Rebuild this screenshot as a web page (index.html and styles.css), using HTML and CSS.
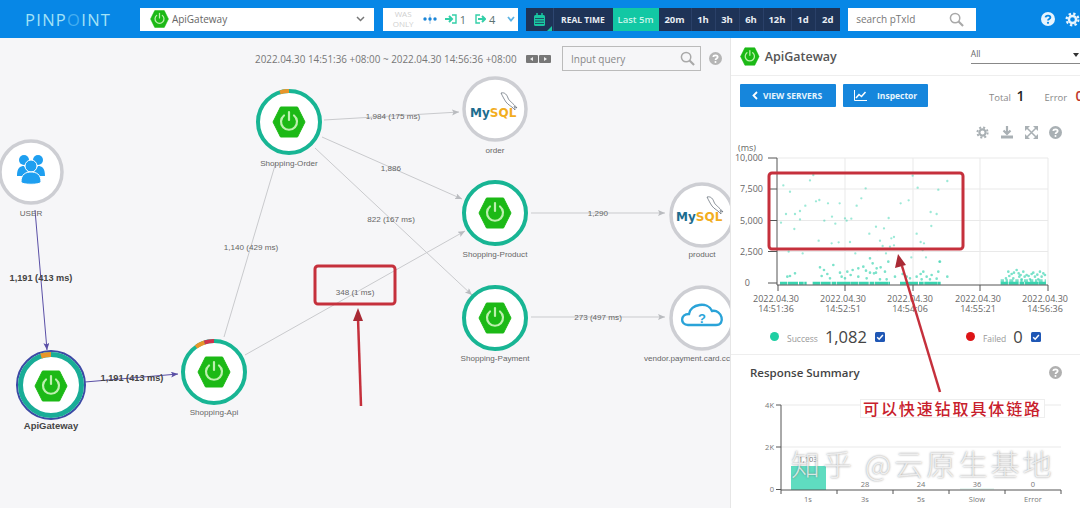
FILE: index.html
```html
<!DOCTYPE html>
<html lang="en">
<head>
    <meta charset="UTF-8">
    <title>Pinpoint - ApiGateway</title>
    <link rel="stylesheet" href="styles.css">
</head>
<body>
    <svg class="defs" width="0" height="0">
        <symbol id="spring" viewBox="-17 -16 34 32">
            <path d="M-16 0-8.5-15H8.5L16 0 8.5 15H-8.5Z" fill="#1cb916" stroke="#1cb916" stroke-linejoin="round"/>
            <path d="M-5 -6.5A8 8 0 1 0 5 -6.5" fill="none" stroke="#bdf0ae" stroke-width="2.2" stroke-linecap="round"/>
            <path d="M0 -10V-2" fill="none" stroke="#bdf0ae" stroke-width="2.2" stroke-linecap="round"/>
        </symbol>
        <symbol id="help" viewBox="0 0 14 14">
            <circle cx="7" cy="7" r="7" fill="currentColor"/>
            <path class="help-mark" d="M4.6 5.4C4.7 3 9.4 3 9.4 5.4 9.4 7 7 6.900 7 8.500" fill="none" stroke-width="1.800"/>
            <circle class="help-dot" cx="7" cy="10.800" r="1.100"/>
        </symbol>
        <symbol id="gear" viewBox="0 0 16 16">
            <circle cx="8" cy="8" r="3.800" fill="none" stroke="currentColor" stroke-width="2.600"/>
            <circle cx="8" cy="8" r="6.300" fill="none" stroke="currentColor" stroke-width="2.400" stroke-dasharray="2.500 2.450"/>
        </symbol>
        <symbol id="search" viewBox="0 0 16 16">
            <circle cx="6.500" cy="6.500" r="5" fill="none" stroke="currentColor" stroke-width="1.600"/>
            <path d="M10.200 10.200 15 15" stroke="currentColor" stroke-width="2.200"/>
        </symbol>
        <symbol id="check" viewBox="0 0 10 10">
            <rect width="10" height="10" rx="1.500" fill="#1f57b5"/>
            <path d="M2.200 5.200 4.200 7.200 7.900 2.900" fill="none" stroke="#fff" stroke-width="1.500"/>
        </symbol>
        <symbol id="mysql" viewBox="0 0 48 30">
            <path d="M31 2C35 1 37 4 38 7 39 10 43 12 47 17L44 15.500C45 17 45 18 45 19 43 16 38 14 36 11 34 8 33 6 31 2Z" fill="none" stroke="#5a6470" stroke-width=".7"/>
            <text x="0" y="26" class="mysql-my">My</text>
            <text x="19.800" y="26" class="mysql-sql">SQL</text>
        </symbol>
    </svg>

    <div class="page">
        <header class="topbar">
            <div class="logo">PINP<span class="logo-o">O</span>INT</div>

            <div class="app-select">
                <svg class="app-icon" width="19" height="18"><use href="#spring"/></svg>
                <span>ApiGateway</span>
                <svg class="chevron" width="9" height="6" viewBox="0 0 9 6"><path d="M1 1 4.500 4.500 8 1" fill="none" stroke="#777" stroke-width="1.500"/></svg>
            </div>

            <div class="was-box">
                <div class="was-only">WAS<br>ONLY</div>
                <svg width="14" height="10" viewBox="0 0 14 10">
                    <path d="M7 0V10" stroke="#9fc9ea" stroke-width="1"/>
                    <g fill="#1b86d8"><circle cx="2" cy="5" r="1.700"/><circle cx="7" cy="5" r="1.700"/><circle cx="12" cy="5" r="1.700"/></g>
                </svg>
                <svg class="flow-in" width="12" height="10" viewBox="0 0 12 10">
                    <path d="M0 5H6M4 2 7 5 4 8" fill="none" stroke="#33cfa8" stroke-width="2"/>
                    <path d="M7 1H11V9H7" fill="none" stroke="#33cfa8" stroke-width="1.400"/>
                </svg>
                <span class="flow-count">1</span>
                <svg class="flow-out" width="11" height="10" viewBox="0 0 11 10">
                    <path d="M5 1H1V9H5" fill="none" stroke="#33cfa8" stroke-width="1.400"/>
                    <path d="M3 5H9M7 2 10 5 7 8" fill="none" stroke="#33cfa8" stroke-width="2"/>
                </svg>
                <span class="flow-count">4</span>
                <svg class="was-chevron" width="8" height="6" viewBox="0 0 8 6"><path d="M1 1 4 4.500 7 1" fill="none" stroke="#5fb4e4" stroke-width="1.800"/></svg>
            </div>

            <nav class="range-bar">
                <div class="range-calendar">
                    <svg width="11" height="13" viewBox="0 0 11 13">
                        <rect y="2" width="11" height="11" rx="1.500" fill="#19c7a2"/>
                        <path d="M3 0V3M8 0V3" stroke="#19c7a2" stroke-width="1.500"/>
                        <path d="M1 5.500H10M1 8H10M1 10.500H10" stroke="#1e3357" stroke-width=".8"/>
                    </svg>
                </div>
                <span class="range-real">REAL TIME</span>
                <span class="range-on">Last 5m</span>
                <span class="range-item r20">20m</span>
                <span class="range-item">1h</span>
                <span class="range-item">3h</span>
                <span class="range-item">6h</span>
                <span class="range-item r12">12h</span>
                <span class="range-item">1d</span>
                <span class="range-item">2d</span>
            </nav>

            <div class="txid-box">
                <span>search pTxId</span>
                <svg class="search-icon" width="15" height="15"><use href="#search"/></svg>
            </div>

            <svg class="top-help" width="14" height="14"><use href="#help"/></svg>
            <svg class="top-gear" width="15" height="15"><use href="#gear"/></svg>
        </header>

        <main class="main">
            <section class="map">
                <svg class="map-canvas" width="730" height="470" viewBox="0 38 730 470">
                    <defs>
                        <marker id="tipGrey" markerWidth="8" markerHeight="8" refX="7" refY="3" orient="auto"><path d="M0 0 7 3 0 6 1.500 3Z" fill="#b9bbbf"/></marker>
                        <marker id="tipPurple" markerWidth="8" markerHeight="8" refX="7" refY="3" orient="auto"><path d="M0 0 7 3 0 6 1.500 3Z" fill="#5a4fa6"/></marker>
                    </defs>

                    <!-- edges -->
                    <g class="edge">
                        <path d="M224 337 276 162"/>
                        <path d="M245 355 465 231" marker-end="url(#tipGrey)"/>
                        <path d="M324 120 459 112" marker-end="url(#tipGrey)"/>
                        <path d="M322 137 462 199" marker-end="url(#tipGrey)"/>
                        <path d="M315 148 472 295" marker-end="url(#tipGrey)"/>
                        <path d="M531 213 665 213" marker-end="url(#tipGrey)"/>
                        <path d="M531 317 665 317" marker-end="url(#tipGrey)"/>
                    </g>
                    <g class="edge-main">
                        <path d="M35 210 47 350" marker-end="url(#tipPurple)"/>
                        <path d="M85 382 178 374" marker-end="url(#tipPurple)"/>
                    </g>

                    <!-- edge labels -->
                    <g class="edge-text">
                        <text x="251" y="250">1,140 (429 ms)</text>
                        <text x="355" y="295">348 (1 ms)</text>
                        <text x="393" y="119">1,984 (175 ms)</text>
                        <text x="391" y="171">1,886</text>
                        <text x="391" y="222">822 (167 ms)</text>
                        <text x="598" y="216">1,290</text>
                        <text x="598" y="320">273 (497 ms)</text>
                    </g>
                    <g class="edge-text bold">
                        <text x="41" y="281">1,191 (413 ms)</text>
                        <text x="132" y="381">1,191 (413 ms)</text>
                    </g>

                    <!-- user -->
                    <circle class="ring-grey" cx="31" cy="172" r="31"/>
                    <g fill="#1e9ff0">
                        <circle cx="24" cy="160" r="5"/><circle cx="38" cy="160" r="5"/>
                        <path d="M17 176C17 168 20 166 24 166L28 172 26 176ZM45 176C45 168 42 166 38 166L34 172 36 176Z"/>
                        <circle cx="31" cy="166" r="6" stroke="#fff"/>
                        <path d="M21 182C21 174 26 172 31 172 36 172 41 174 41 182 41 185 21 185 21 182Z" stroke="#fff"/>
                    </g>

                    <!-- apigateway -->
                    <circle class="node-bg" cx="51" cy="385" r="33"/>
                    <circle class="ring-outer" cx="51" cy="385" r="34"/>
                    <circle class="ring-thick" cx="51" cy="385" r="30.500"/>
                    <path class="arc-orange thick" d="M41 356A30.500 30.500 0 0 1 51 354.500"/>
                    <use href="#spring" x="34" y="370" width="34" height="32"/>

                    <!-- shopping-api -->
                    <circle class="ring-teal" cx="214" cy="372" r="31"/>
                    <path class="arc-orange" d="M196 347A31 31 0 0 1 204.500 342.500"/>
                    <path class="arc-red" d="M204.500 342.500A31 31 0 0 1 214 341"/>
                    <use href="#spring" x="197" y="356" width="34" height="32"/>

                    <!-- shopping-order -->
                    <circle class="ring-teal" cx="289" cy="122" r="31"/>
                    <path class="arc-orange" d="M280 92.300A31 31 0 0 1 289 91"/>
                    <use href="#spring" x="272" y="106" width="34" height="32"/>

                    <!-- shopping-product / payment -->
                    <circle class="ring-teal" cx="495" cy="213" r="31"/>
                    <use href="#spring" x="478" y="197" width="34" height="32"/>
                    <circle class="ring-teal" cx="495" cy="318" r="31"/>
                    <use href="#spring" x="478" y="302" width="34" height="32"/>

                    <!-- databases and cloud -->
                    <circle class="ring-grey" cx="495" cy="109" r="31"/>
                    <use href="#mysql" x="470" y="91" width="48" height="30"/>
                    <circle class="ring-grey" cx="702" cy="215" r="31"/>
                    <use href="#mysql" x="676" y="195" width="48" height="30"/>
                    <circle class="ring-grey" cx="702" cy="318" r="31"/>
                    <path d="M688 325C680 325 680 314 689 314 690 304 708 301 712 311 722 309 726 325 716 325Z" fill="none" stroke="#2aa3d8" stroke-width="2.400"/>
                    <text class="cloud-mark" x="702" y="323">?</text>

                    <!-- node names -->
                    <g class="node-name">
                        <text x="31" y="216">USER</text>
                        <text x="214" y="415">Shopping-Api</text>
                        <text x="289" y="166">Shopping-Order</text>
                        <text x="495" y="153">order</text>
                        <text x="495" y="257">Shopping-Product</text>
                        <text x="702" y="257">product</text>
                        <text x="495" y="361">Shopping-Payment</text>
                        <text class="vendor-name" x="644" y="361">vendor.payment.card.cc</text>
                    </g>
                    <text class="node-name strong" x="51" y="429">ApiGateway</text>
                </svg>

                <div class="map-toolbar">
                    <span class="time-range">2022.04.30 14:51:36 +08:00 ~ 2022.04.30 14:56:36 +08:00</span>
                    <span class="video-btns"><i class="video-prev"></i><i class="video-next"></i></span>
                    <div class="query-box">
                        <span>Input query</span>
                        <svg class="search-icon" width="15" height="15"><use href="#search"/></svg>
                    </div>
                    <svg class="grey-help" width="13" height="13"><use href="#help"/></svg>
                </div>
            </section>

            <aside class="panel">
                <div class="panel-head">
                    <svg width="20" height="19"><use href="#spring"/></svg>
                    <h2>ApiGateway</h2>
                    <div class="agent-select"><span>All</span><i class="caret"></i></div>
                </div>

                <div class="panel-actions">
                    <button class="blue-btn view-btn">
                        <svg width="6" height="9" viewBox="0 0 6 9"><path d="M5 1 1.500 4.500 5 8" fill="none" stroke="#fff" stroke-width="1.800"/></svg>
                        VIEW SERVERS
                    </button>
                    <button class="blue-btn inspector-btn">
                        <svg width="13" height="11" viewBox="0 0 13 11"><path d="M.5 0V10.500H13" fill="none" stroke="#fff"/><path d="M2 8 5 4.500 7.500 6.500 11.500 2" fill="none" stroke="#fff" stroke-width="1.500"/></svg>
                        Inspector
                    </button>
                    <div class="stat-total">Total <b>1</b></div>
                    <div class="stat-error">Error <b>0</b></div>
                </div>

                <div class="chart-tools">
                    <svg width="13" height="13"><use href="#gear"/></svg>
                    <svg width="14" height="13" viewBox="0 0 14 13"><path d="M7 0V7M3.500 4.500 7 8 10.500 4.500" fill="none" stroke="currentColor" stroke-width="2.200"/><path d="M1 9.500H13V12.500H1Z" fill="currentColor"/></svg>
                    <svg width="13" height="13" viewBox="0 0 13 13"><path d="M2 2 11 11M11 2 2 11" stroke="currentColor" stroke-width="1.500"/><path d="M0 0H5L0 5ZM13 0H8L13 5ZM0 13H5L0 8ZM13 13H8L13 8Z" fill="currentColor"/></svg>
                    <svg width="13" height="13"><use href="#help"/></svg>
                </div>

                <svg class="scatter" width="349" height="180" viewBox="731 145 349 180">
                    <g class="grid">
                        <path d="M777 158H1048M777 189H1048M777 220.500H1048M777 251.500H1048"/>
                        <path d="M845 158V285M913 158V285M980 158V285M1048 158V285"/>
                    </g>
                    <g transform="translate(730 120) scale(.3333)">
                        <path class="dots" d="M160 196h0M180 215h0M168 282h0M153 308h0M195 282h0M210 273h0M210 298h0M193 327h0M226 257h0M240 181h0M250 165h0M258 244h0M268 240h0M294 250h0M283 302h0M306 290h0M316 311h0M329 250h0M266 362h0M305 370h0M326 367h0M345 295h0M350 302h0M364 296h0M360 366h0M380 257h0M394 235h0M407 205h0M418 341h0M438 320h0M450 362h0M462 325h0M476 294h0M458 378h0M484 355h0M492 351h0M442 388h0M480 380h0M492 376h0M512 250h0M536 241h0M548 167h0M563 203h0M560 341h0M572 366h0M582 370h0M602 276h0M604 318h0M620 282h0M625 209h0M652 183h0M176 395h0M218 400h0M376 400h0M468 400h0M544 412h0M578 390h0M588 412h0M628 425h0"/>
                        <path class="dots low" d="M172 470h0M180 468h0M195 460h0M270 442h0M275 468h0M282 450h0M292 462h0M310 435h0M330 458h0M335 470h0M352 455h0M362 465h0M368 450h0M385 445h0M385 470h0M400 440h0M408 452h0M420 458h0M432 460h0M438 458h0M420 415h0M428 430h0M440 445h0M452 442h0M465 455h0M475 425h0M495 470h0M518 462h0M530 470h0M540 475h0M560 470h0M572 462h0M580 455h0M590 470h0M605 465h0M625 455h0M630 425h0M652 470h0M835 455h0M845 462h0M860 450h0M868 470h0M880 455h0M890 465h0M905 462h0M915 470h0M930 455h0M935 470h0M945 465h0M850 475h0M875 478h0M900 478h0M925 478h0M838 468h0M852 458h0M866 460h0M872 465h0M884 470h0M896 468h0M910 458h0M922 464h0M940 460h0M828 475h0M300 475h0M345 475h0M410 475h0M450 478h0M470 478h0M575 478h0M600 478h0M620 476h0"/>
                        <path class="dots band" d="M150 490H230M248 490H480M510 490H632M812 490H948"/>
                        <path class="dots band2" d="M812 482H948"/>
                    </g>
                    <path class="axis" d="M768 158H777V285H1048M768 189H777M768 220.500H777M768 251.500H777M768 283H777M778 285V291M845 285V291M913 285V291M980 285V291M1048 285V291"/>
                    <text class="unit" x="747" y="151">(ms)</text>
                    <g class="y-text">
                        <text x="763" y="161">10,000</text>
                        <text x="763" y="192">7,500</text>
                        <text x="763" y="223.500">5,000</text>
                        <text x="763" y="254.500">2,500</text>
                        <text x="750" y="286">0</text>
                    </g>
                    <g class="x-text">
                        <text x="776" y="302">2022.04.30</text><text x="776" y="312">14:51:36</text>
                        <text x="843" y="302">2022.04.30</text><text x="843" y="312">14:52:51</text>
                        <text x="910" y="302">2022.04.30</text><text x="910" y="312">14:54:06</text>
                        <text x="978" y="302">2022.04.30</text><text x="978" y="312">14:55:21</text>
                        <text x="1045" y="302">2022.04.30</text><text x="1045" y="312">14:56:36</text>
                    </g>
                </svg>

                <div class="legend">
                    <span class="legend-dot dot-ok"></span>
                    <span class="legend-name">Success</span>
                    <span class="legend-count">1,082</span>
                    <svg width="10" height="10"><use href="#check"/></svg>
                    <span class="legend-dot dot-fail"></span>
                    <span class="legend-name">Failed</span>
                    <span class="legend-count">0</span>
                    <svg width="10" height="10"><use href="#check"/></svg>
                </div>

                <div class="summary-head">
                    <h3>Response Summary</h3>
                    <svg width="13" height="13"><use href="#help"/></svg>
                </div>

                <svg class="bars" width="349" height="118" viewBox="731 390 349 118">
                    <g class="grid">
                        <path d="M781 405H1061M781 447H1061"/>
                    </g>
                    <rect class="bar" x="791" y="466" width="35" height="24"/>
                    <path d="M960 489H994" stroke="#d5efe7"/>
                    <path class="axis" d="M776 405H781M776 447H781M776 489.500H781M781 405V490H1061M781 490V494M837 490V494M893 490V494M949 490V494M1005 490V494M1061 490V494"/>
                    <g class="y-text">
                        <text x="774" y="408">4K</text>
                        <text x="774" y="450">2K</text>
                        <text x="774" y="492">0</text>
                    </g>
                    <g class="x-text">
                        <text x="808" y="462">1,103</text>
                        <text x="865" y="487">28</text>
                        <text x="921" y="487">24</text>
                        <text x="977" y="487">36</text>
                        <text x="1033" y="487">0</text>
                        <text x="808" y="502">1s</text>
                        <text x="865" y="502">3s</text>
                        <text x="921" y="502">5s</text>
                        <text x="977" y="502">Slow</text>
                        <text x="1033" y="502">Error</text>
                    </g>
                </svg>
            </aside>
        </main>

        <!-- red notes on top of the screenshot -->
        <svg class="notes" width="1080" height="508">
            <rect x="315" y="266" width="80" height="38" rx="3"/>
            <rect x="769" y="173" width="194" height="76" rx="3"/>
            <path d="M361 406 358 318"/>
            <path class="tip" d="M358 308 353 321H363Z"/>
            <path d="M940 392 902 266"/>
            <path class="tip" d="M898 254 895 268 906 265Z"/>
        </svg>
        <div class="callout">可以快速钻取具体链路</div>
        <div class="watermark">知乎 @云原生基地</div>
    </div>
</body>
</html>
```

FILE: styles.css
```css
* {
    margin: 0;
    padding: 0;
    box-sizing: border-box;
}

body {
    font-family: "Open Sans", "Noto Sans", sans-serif;
    background: #fff;
    color: #555;
    overflow: hidden;
}

.defs {
    position: absolute;
}

.page {
    position: relative;
    width: 1080px;
    height: 508px;
    overflow: hidden;
}

.help-mark {
    stroke: var(--help-mark, #fff);
}

.help-dot {
    fill: var(--help-mark, #fff);
}

/* top bar */
.topbar {
    display: flex;
    align-items: center;
    height: 38px;
    background: #0787e6;
    padding: 0 0 0 25px;
}

.logo {
    width: 115px;
    font-size: 16.5px;
    letter-spacing: 1.3px;
    color: #a3e2f6;
}

.logo-o {
    color: #45aef0;
}

.app-select {
    display: flex;
    align-items: center;
    width: 234px;
    height: 23px;
    padding: 0 9px 0 10px;
    background: #fff;
    font-size: 10px;
    color: #666;
}

.app-select span {
    margin-left: 3px;
}

.chevron {
    margin-left: auto;
}

.was-box {
    display: flex;
    align-items: center;
    width: 135px;
    height: 23px;
    margin-left: 9px;
    padding-left: 9px;
    background: #fff;
}

.was-only {
    width: 23px;
    margin-right: 8px;
    font-size: 8px;
    line-height: 10px;
    color: #cfcfcf;
    text-align: center;
}

.flow-in {
    margin-left: 8px;
}

.flow-out {
    margin-left: 9px;
}

.flow-count {
    margin-left: 3px;
    font-size: 11px;
    color: #5c7272;
}

.was-chevron {
    margin-left: 12px;
}

.range-bar {
    display: flex;
    align-items: center;
    width: 315px;
    height: 23px;
    margin-left: 8px;
    background: #1e3357;
    color: #e8edf3;
    font-size: 9.5px;
    font-weight: 700;
}

.range-calendar {
    position: relative;
    display: flex;
    align-items: center;
    justify-content: center;
    width: 28px;
    height: 100%;
    border-right: 1px solid #2e4670;
}

.range-calendar::after {
    content: "";
    position: absolute;
    right: 1px;
    bottom: 0;
    border-left: 5px solid transparent;
    border-bottom: 5px solid #19c7a2;
}

.range-real {
    width: 59px;
    text-align: center;
    font-size: 8.5px;
}

.range-on {
    width: 46px;
    height: 100%;
    line-height: 23px;
    text-align: center;
    background: #12c8a4;
    color: #c9f5ea;
    font-weight: 600;
}

.range-item {
    width: 24px;
    text-align: center;
    border-right: 1px solid #2a4068;
    line-height: 23px;
}

.range-item.r20 {
    width: 33px;
}

.range-item.r12 {
    width: 28px;
}

.range-item:last-child {
    border-right: 0;
    flex: 1;
}

.txid-box {
    display: flex;
    align-items: center;
    justify-content: space-between;
    width: 128px;
    height: 23px;
    margin-left: 8px;
    padding: 0 3px 0 8px;
    background: #fff;
    font-size: 10px;
    color: #777;
}

.txid-box .search-icon {
    margin-right: 9px;
}

.search-icon {
    color: #a9a9a9;
}

.top-help {
    --help-mark: #0787e6;
    margin-left: 65px;
    color: #e8f4fd;
}

.top-gear {
    margin-left: 10px;
    color: #e8f4fd;
}

/* server map */
.main {
    display: flex;
    height: 470px;
}

.map {
    position: relative;
    width: 730px;
    flex: none;
    background: #f6f6f8;
    overflow: hidden;
}

.map-canvas {
    position: absolute;
    left: 0;
    top: 0;
}

.edge path {
    fill: none;
    stroke: #c9cacd;
    stroke-width: 1;
}

.edge-main path {
    fill: none;
    stroke: #5a4fa6;
    stroke-width: 1;
}

.edge-text text,
.node-name text,
.node-name.strong {
    font-family: "Liberation Sans", sans-serif;
    text-anchor: middle;
    font-size: 8.1px;
    fill: #666;
}

.node-name .vendor-name {
    text-anchor: start;
}

.edge-text.bold text {
    font-weight: 700;
    font-size: 9.2px;
    fill: #444;
}

.node-name.strong {
    font-weight: 700;
    font-size: 9.5px;
    fill: #444;
}

.ring-grey,
.ring-teal,
.node-bg,
.ring-outer,
.ring-thick {
    fill: #fff;
}

.ring-grey {
    stroke: #cdced3;
    stroke-width: 3.5;
}

.ring-teal {
    stroke: #18b594;
    stroke-width: 4;
}

.ring-outer {
    fill: none;
    stroke: #3c4aa5;
    stroke-width: 2;
}

.ring-thick {
    fill: none;
    stroke: #19ad97;
    stroke-width: 5;
}

.arc-orange,
.arc-red {
    fill: none;
    stroke-width: 4;
}

.arc-orange {
    stroke: #e8952a;
}

.arc-orange.thick {
    stroke-width: 5;
}

.arc-red {
    stroke: #d0324c;
}

.mysql-my,
.mysql-sql {
    font-family: "DejaVu Sans", sans-serif;
    font-weight: 700;
    font-size: 12px;
}

.mysql-my {
    fill: #1d6c8f;
}

.mysql-sql {
    fill: #f2ad1f;
}

.cloud-mark {
    font-family: "Liberation Sans", sans-serif;
    font-weight: 700;
    font-size: 13px;
    text-anchor: middle;
    fill: #2aa3d8;
}

.map-toolbar {
    position: relative;
    display: flex;
    align-items: center;
    height: 25px;
    margin-top: 8px;
    padding-left: 255px;
}

.time-range {
    width: 271px;
    font-size: 9.9px;
    color: #777;
    white-space: nowrap;
}

.video-btns {
    display: flex;
    gap: 1px;
}

.video-btns i {
    display: flex;
    align-items: center;
    justify-content: center;
    width: 12px;
    height: 8px;
    border-radius: 1px;
    background: #777;
}

.video-btns i::after {
    content: "";
    border: 2px solid transparent;
}

.video-btns .video-prev::after {
    border-right: 3px solid #eee;
    margin-left: -3px;
}

.video-btns .video-next::after {
    border-left: 3px solid #eee;
    margin-left: 3px;
}

.query-box {
    display: flex;
    align-items: center;
    justify-content: space-between;
    width: 139px;
    height: 25px;
    margin-left: 11px;
    padding: 0 5px 0 8px;
    border: 1px solid #bbb;
    font-size: 10px;
    color: #888;
}

.grey-help {
    margin-left: 8px;
    color: #b5b5b5;
}

/* right panel */
.panel {
    width: 350px;
    flex: none;
    border-left: 1px solid #e6e6e6;
    background: #fff;
}

.panel-head {
    display: flex;
    align-items: center;
    height: 38px;
    padding-left: 9px;
    border-bottom: 1px solid #eee;
}

.panel-head h2 {
    margin-left: 5px;
    font-size: 12.5px;
    font-weight: 600;
    color: #555;
}

.agent-select {
    position: relative;
    align-self: flex-start;
    width: 111px;
    height: 16px;
    margin-left: 134px;
    margin-top: 10px;
    border-bottom: 1px solid #888;
    font-size: 8.5px;
    line-height: 12px;
    color: #666;
}

.caret {
    position: absolute;
    right: 1px;
    top: 5px;
    border: 3px solid transparent;
    border-top: 4px solid #333;
}

.panel-actions {
    display: flex;
    align-items: center;
    height: 44px;
    padding: 8px 0 13px 9px;
}

.blue-btn {
    display: flex;
    flex: none;
    align-items: center;
    height: 23px;
    border: 0;
    border-radius: 1px;
    background: #1686dc;
    color: #e6f4fd;
    font-family: "Open Sans", sans-serif;
    font-size: 8.5px;
    font-weight: 700;
}

.view-btn {
    width: 96px;
    gap: 5px;
    padding-left: 12px;
}

.inspector-btn {
    width: 85px;
    margin-left: 7px;
    gap: 10px;
    padding-left: 11px;
}

.stat-total,
.stat-error {
    flex: none;
    font-size: 9.5px;
    color: #888;
    white-space: nowrap;
}

.stat-total {
    margin-left: 61px;
}

.stat-error {
    margin-left: 20px;
}

.stat-total b,
.stat-error b {
    margin-left: 3px;
    font-size: 14px;
    font-weight: 600;
    color: #222;
}

.stat-error b {
    margin-left: 6px;
    color: #c0392b;
}

.chart-tools {
    display: flex;
    justify-content: flex-end;
    align-items: center;
    gap: 11px;
    height: 25px;
    padding-right: 18px;
    color: #a9b0b4;
}

.scatter,
.bars {
    display: block;
}

.grid path {
    fill: none;
    stroke: #e9e9e9;
    stroke-width: 1;
}

.axis {
    fill: none;
    stroke: #555;
    stroke-width: 1;
}

.dots {
    fill: none;
    stroke: #23cfa6;
    stroke-width: 7;
    stroke-linecap: round;
    opacity: .45;
}

.dots.low {
    stroke-width: 8;
    opacity: .6;
}

.dots.band {
    stroke-width: 9;
    stroke-linecap: butt;
    stroke-dasharray: 22 2 30 3 14 2 40 1;
    opacity: .9;
}

.dots.band2 {
    stroke-width: 8;
    stroke-linecap: butt;
    stroke-dasharray: 10 5 7 4 12 6;
    opacity: .6;
}

.y-text text,
.unit,
.x-text text {
    font-family: "Open Sans", sans-serif;
    font-size: 9px;
    fill: #666;
}

.y-text text {
    text-anchor: end;
}

.unit {
    text-anchor: middle;
}

.x-text text {
    text-anchor: middle;
}

.legend {
    display: flex;
    align-items: center;
    height: 30px;
    padding: 0 0 6px 39px;
    border-bottom: 1px solid #eee;
}

.legend-dot {
    width: 9px;
    height: 9px;
    border-radius: 50%;
}

.dot-ok {
    background: #1fcfa3;
}

.dot-fail {
    margin-left: 81px;
    background: #dd1416;
}

.legend-name {
    margin-left: 8px;
    margin-top: 3px;
    font-size: 8.5px;
    color: #999;
}

.legend-count {
    margin-left: 7px;
    margin-right: 8px;
    font-size: 16.5px;
    color: #444;
}

.summary-head {
    display: flex;
    align-items: center;
    justify-content: space-between;
    height: 35px;
    padding: 0 18px 0 19px;
    color: #b0b0b0;
}

.summary-head h3 {
    font-size: 11.5px;
    font-weight: 600;
    color: #444;
}

.bar {
    fill: #5fdcc0;
}

.bars .y-text text,
.bars .x-text text {
    font-size: 7.5px;
    fill: #777;
}

/* notes drawn over the page */
.notes {
    position: absolute;
    left: 0;
    top: 0;
    pointer-events: none;
}

.notes rect,
.notes path {
    fill: none;
    stroke: #c5303c;
    stroke-width: 2.5;
}

.notes rect {
    stroke-width: 3;
}

.notes .tip {
    fill: #a92a35;
    stroke: none;
}

.callout {
    position: absolute;
    left: 860px;
    top: 399px;
    width: 185px;
    height: 19px;
    border: 1px solid #eee;
    background: #fff;
    font-family: "Noto Sans CJK SC", sans-serif;
    font-weight: 500;
    font-size: 16px;
    line-height: 17px;
    letter-spacing: 1.9px;
    text-align: center;
    color: #c8202c;
    white-space: nowrap;
}

.watermark {
    position: absolute;
    left: 791px;
    top: 444px;
    font-family: "Noto Sans CJK SC", sans-serif;
    font-weight: 300;
    font-size: 29px;
    line-height: 38px;
    letter-spacing: 3.1px;
    color: rgba(255, 255, 255, .75);
    text-shadow: 0 0 2px rgba(90, 90, 90, .7);
    white-space: nowrap;
}
```
